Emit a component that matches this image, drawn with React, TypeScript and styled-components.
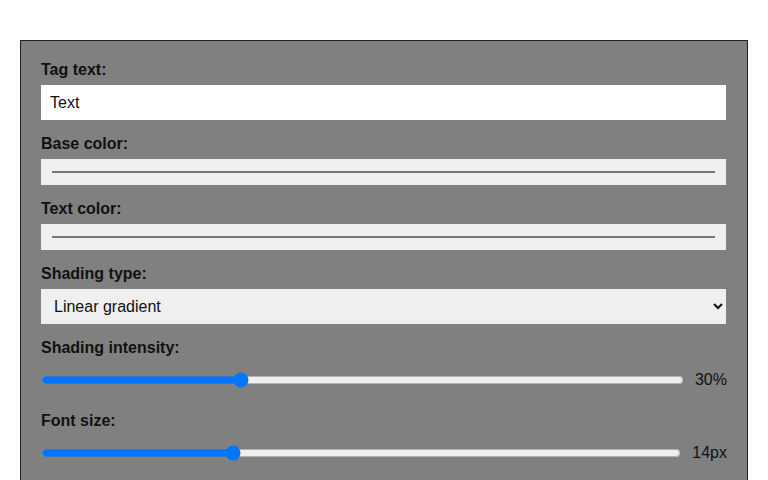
import React, { useState } from 'react'
import styled, { createGlobalStyle } from 'styled-components'

const GlobalStyle = createGlobalStyle`
    body {
        margin: 0;
        background: #fff;
        font-family: 'Liberation Sans', Arial, sans-serif;
    }
`

const Page = styled.div`
    padding: 40px 20px;
`

const Panel = styled.div`
    background: #808080;
    border: 1px solid #222;
    padding: 20px;
`

const Field = styled.div`
    margin-bottom: 15px;
`

const Label = styled.label`
    display: block;
    margin-bottom: 6px;
    font-size: 16px;
    font-weight: bold;
    color: #111;
`

const TextInput = styled.input`
    display: block;
    box-sizing: border-box;
    width: calc(100% - 1px);
    height: 35px;
    padding: 8px 8px 8px 9px;
    border: none;
    background: #fff;
    font-family: 'Liberation Sans', Arial, sans-serif;
    font-size: 16px;
    color: #111;
`

const ColorInput = styled.input`
    display: block;
    box-sizing: border-box;
    width: calc(100% - 1px);
    height: 26px;
    padding: 8px 9px;
    border: none;
    background: #efefef;
`

const Select = styled.select`
    display: block;
    box-sizing: border-box;
    width: calc(100% - 1px);
    padding: 8px 8px 8px 9px;
    border: none;
    background: #efefef;
    font-family: 'Liberation Sans', Arial, sans-serif;
    font-size: 16px;
    color: #111;
`

const SliderRow = styled.div`
    display: flex;
    align-items: center;
    height: 34px;
`

const Slider = styled.input`
    flex: 1;
    margin: 0 1px 0 0;
    padding: 8px 0;
`

const Value = styled.span`
    margin-left: 10px;
    font-size: 16px;
    color: #111;
`

const App = () => {
    const [text, setText] = useState('Text')
    const [base, setBase] = useState('#808080')
    const [textColor, setTextColor] = useState('#808080')
    const [shading, setShading] = useState('linear')
    const [intensity, setIntensity] = useState(30)
    const [fontSize, setFontSize] = useState(14)

    return (
        <Page>
            <GlobalStyle />
            <Panel>
                <Field>
                    <Label>Tag text:</Label>
                    <TextInput value={text} onChange={(e) => setText(e.target.value)} />
                </Field>
                <Field>
                    <Label>Base color:</Label>
                    <ColorInput type="color" value={base} onChange={(e) => setBase(e.target.value)} />
                </Field>
                <Field>
                    <Label>Text color:</Label>
                    <ColorInput type="color" value={textColor} onChange={(e) => setTextColor(e.target.value)} />
                </Field>
                <Field>
                    <Label>Shading type:</Label>
                    <Select value={shading} onChange={(e) => setShading(e.target.value)}>
                        <option value="none">None</option>
                        <option value="linear">Linear gradient</option>
                        <option value="radial">Radial gradient</option>
                    </Select>
                </Field>
                <Field>
                    <Label>Shading intensity:</Label>
                    <SliderRow>
                        <Slider
                            type="range"
                            min={0}
                            max={98}
                            value={intensity}
                            onChange={(e) => setIntensity(Number(e.target.value))}
                        />
                        <Value>{intensity}%</Value>
                    </SliderRow>
                </Field>
                <Field>
                    <Label>Font size:</Label>
                    <SliderRow>
                        <Slider
                            type="range"
                            min={9}
                            max={26}
                            value={fontSize}
                            onChange={(e) => setFontSize(Number(e.target.value))}
                        />
                        <Value>{fontSize}px</Value>
                    </SliderRow>
                </Field>
            </Panel>
        </Page>
    )
}

export default App
